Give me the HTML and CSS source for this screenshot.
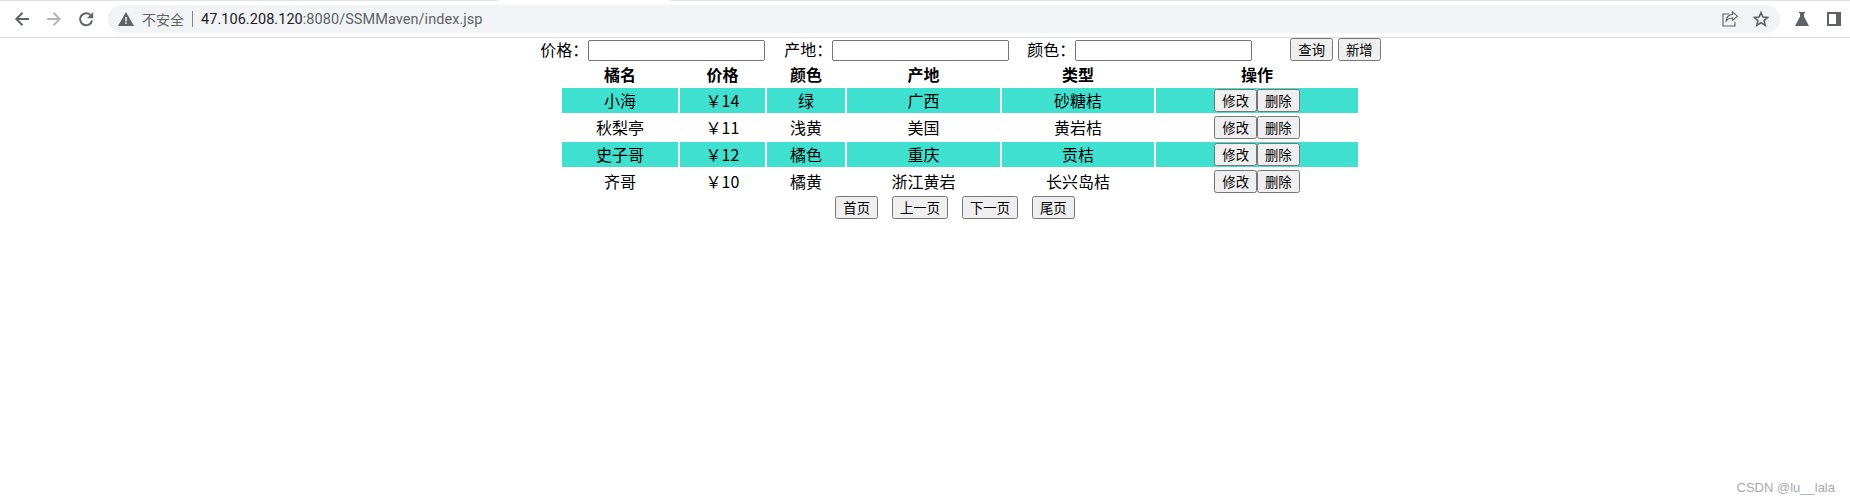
FILE: index.html
```html
<!DOCTYPE html>
<html lang="zh-CN">
<head>
  <meta charset="UTF-8">
  <title>SSMMaven</title>
  <link rel="stylesheet" href="styles.css">
</head>
<body>
  <div class="toolbar">
    <div class="tabedge"></div>
    <svg class="navicon back" viewBox="0 0 16 16"><path d="M15 8H2.500M8.500 1.800 2.300 8l6.200 6.200" fill="none" stroke="#5f6368" stroke-width="2"/></svg>
    <svg class="navicon" viewBox="0 0 16 16"><path d="M1 8h12.500M7.500 1.800 13.700 8l-6.200 6.200" fill="none" stroke="#b4b6b9" stroke-width="2"/></svg>
    <svg class="navicon" viewBox="0 0 16 16"><path d="M14 9.500A6 6 0 1 1 12.400 4" fill="none" stroke="#5f6368" stroke-width="2"/><path d="M15.200 1v6.200H9z" fill="#5f6368"/></svg>
    <div class="omnibox">
      <svg class="warn" viewBox="0 0 16 14"><path d="M8 0 16 14H0z" fill="#5f6368"/><path d="M7.200 5h1.600v4.400H7.200zM7.200 10.400h1.600V12H7.200z" fill="#f1f3f4"/></svg>
      <span class="insecure">不安全</span>
      <span class="divider"></span>
      <span class="url"><span class="host">47.106.208.120</span>:8080/SSMMaven/index.jsp</span>
      <svg class="omniicon share" viewBox="0 0 16 16"><path d="M7 3H1v12h12v-4" fill="none" stroke="#5f6368" stroke-width="1.100"/><path d="M10.500 1 15.500 5.200 10.500 9.400V7C7.500 7 5.500 8 4 10.500 4.300 7 6.500 3.800 10.500 3.400z" fill="none" stroke="#5f6368" stroke-width="1.100"/></svg>
      <svg class="omniicon star" viewBox="0 0 16 16"><path d="M8 1.600 9.900 6l4.800.4-3.600 3.200 1.100 4.700L8 11.800l-4.200 2.500 1.100-4.700L1.300 6.400 6.100 6z" fill="none" stroke="#5f6368" stroke-width="1.600"/></svg>
    </div>
    <svg class="toolicon flask" viewBox="0 0 14 14"><path d="M4 0h6v1.200H9v3.300L14 14H0L5 4.500V1.200H4z" fill="#5f6368"/></svg>
    <svg class="toolicon panel" viewBox="0 0 14 14"><path d="M0 0h14v14H0zM2 2v10h7V2z" fill="#5f6368" fill-rule="evenodd"/></svg>
  </div>

  <div class="content">
    <form class="search">
      <label class="field">价格：<input type="text"></label>
      <label class="field">产地：<input type="text"></label>
      <label class="field">颜色：<input type="text"></label>
      <div class="actions">
        <button type="button">查询</button>
        <button type="button">新增</button>
      </div>
    </form>

    <table class="list">
      <colgroup>
        <col class="c-name"><col class="c-price"><col class="c-color"><col class="c-place"><col class="c-type"><col class="c-op">
      </colgroup>
      <tr><th>橘名</th><th>价格</th><th>颜色</th><th>产地</th><th>类型</th><th>操作</th></tr>
      <tr class="odd"><td>小海</td><td>￥14</td><td>绿</td><td>广西</td><td>砂糖桔</td><td><div class="ops"><button type="button">修改</button><button type="button">删除</button></div></td></tr>
      <tr><td>秋梨亭</td><td>￥11</td><td>浅黄</td><td>美国</td><td>黄岩桔</td><td><div class="ops"><button type="button">修改</button><button type="button">删除</button></div></td></tr>
      <tr class="odd"><td>史子哥</td><td>￥12</td><td>橘色</td><td>重庆</td><td>贡桔</td><td><div class="ops"><button type="button">修改</button><button type="button">删除</button></div></td></tr>
      <tr><td>齐哥</td><td>￥10</td><td>橘黄</td><td>浙江黄岩</td><td>长兴岛桔</td><td><div class="ops"><button type="button">修改</button><button type="button">删除</button></div></td></tr>
    </table>

    <div class="pager">
      <button type="button">首页</button>
      <button type="button">上一页</button>
      <button type="button">下一页</button>
      <button type="button">尾页</button>
    </div>
  </div>

  <div class="watermark">CSDN @lu__lala</div>
</body>
</html>
```

FILE: styles.css
```css
body {
  margin: 0;
  background: #fff;
  color: #000;
  font-family: "Noto Sans CJK SC", sans-serif;
  font-size: 16px;
}

.toolbar {
  position: relative;
  height: 37px;
  display: flex;
  align-items: center;
  border-bottom: 1px solid #dadce0;
}

.tabedge {
  position: absolute;
  top: 0;
  left: 0;
  right: 0;
  height: 1px;
  background: linear-gradient(to right, #dee1e6 497px, #fff 497px, #fff 671px, #dee1e6 671px);
}

.navicon {
  width: 16px;
  height: 16px;
  margin-left: 16px;
  flex: none;
}

.navicon.back {
  margin-left: 14px;
}

.omnibox {
  margin-left: 14px;
  width: 1672px;
  height: 28px;
  margin-top: 1px;
  background: #f1f3f4;
  border-radius: 14px;
  display: flex;
  align-items: center;
  font-family: Roboto, "Noto Sans CJK SC", sans-serif;
  font-size: 14.5px;
  flex: none;
}

.warn {
  width: 16px;
  height: 14px;
  margin-left: 10px;
}

.insecure {
  margin-left: 8px;
  font-size: 14px;
  color: #5f6368;
  font-family: "Noto Sans CJK SC", sans-serif;
}

.divider {
  width: 1px;
  height: 16px;
  background: #80868b;
  margin-left: 8px;
}

.url {
  margin-left: 8px;
  color: #5f6368;
  letter-spacing: 0.05px;
}

.host {
  color: #202124;
}

.omniicon {
  width: 16px;
  height: 16px;
}

.share {
  margin-left: auto;
}

.star {
  margin-left: 15px;
  margin-right: 11px;
}

.toolicon {
  width: 14px;
  height: 14px;
  flex: none;
}

.flask {
  margin-left: 15px;
}

.panel {
  margin-left: 18px;
}

.content {
  padding-left: 70px;
}

.search {
  display: flex;
  justify-content: center;
  height: 23px;
}

.field {
  display: flex;
  align-items: flex-end;
  height: 23px;
  line-height: 23px;
  margin-right: 19px;
  white-space: nowrap;
}

.field:first-child {
  margin-left: 1px;
}

.field:nth-child(2) {
  margin-right: 18px;
}

.field input {
  width: 177px;
  height: 21px;
  box-sizing: border-box;
  margin: 0;
}

.actions {
  margin-left: 19px;
  display: flex;
  gap: 5px;
}

button {
  font-family: "Noto Sans CJK SC", sans-serif;
  font-size: 13.33px;
  line-height: 17px;
  height: 23px;
  margin: 0;
  padding: 1px 6px;
  box-sizing: border-box;
}

.list {
  width: 800px;
  margin: 0 auto;
  border-spacing: 2px;
  table-layout: fixed;
}

.list th,
.list td {
  height: 23px;
  padding: 0;
  line-height: 23px;
  text-align: center;
}

.list td {
  height: 25px;
}

.list .odd td {
  background: #40e0d0;
}

.ops {
  display: flex;
  justify-content: center;
}

.c-name { width: 116px; }
.c-price { width: 85px; }
.c-color { width: 78px; }
.c-place { width: 153px; }
.c-type { width: 152px; }
.c-op { width: 202px; }

.pager {
  display: flex;
  justify-content: center;
  gap: 14px;
  padding-right: 10px;
}

.watermark {
  position: absolute;
  right: 15px;
  bottom: 8px;
  font-family: "Liberation Sans", sans-serif;
  font-size: 13px;
  color: #aaa;
}
```
